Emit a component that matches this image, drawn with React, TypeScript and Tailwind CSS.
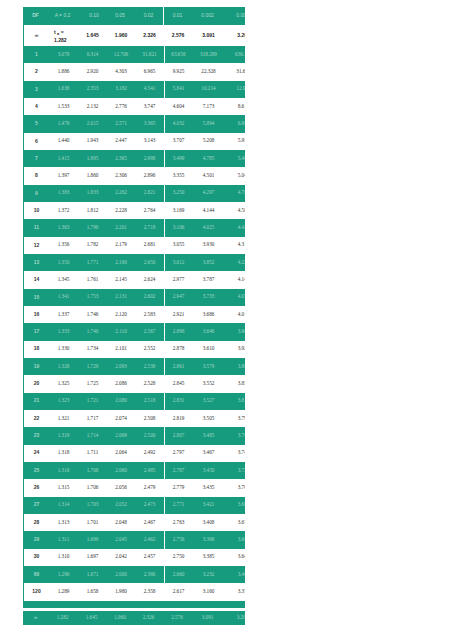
import React from "react";

const rows: [string, string[]][] = [
  ["1", ["3.078", "6.314", "12.706", "31.821", "63.656", "318.289", "636.578"]],
  ["2", ["1.886", "2.920", "4.303", "6.965", "9.925", "22.328", "31.600"]],
  ["3", ["1.638", "2.353", "3.182", "4.541", "5.841", "10.214", "12.924"]],
  ["4", ["1.533", "2.132", "2.776", "3.747", "4.604", "7.173", "8.610"]],
  ["5", ["1.476", "2.015", "2.571", "3.365", "4.032", "5.894", "6.869"]],
  ["6", ["1.440", "1.943", "2.447", "3.143", "3.707", "5.208", "5.959"]],
  ["7", ["1.415", "1.895", "2.365", "2.998", "3.499", "4.785", "5.408"]],
  ["8", ["1.397", "1.860", "2.306", "2.896", "3.355", "4.501", "5.041"]],
  ["9", ["1.383", "1.833", "2.262", "2.821", "3.250", "4.297", "4.781"]],
  ["10", ["1.372", "1.812", "2.228", "2.764", "3.169", "4.144", "4.587"]],
  ["11", ["1.363", "1.796", "2.201", "2.718", "3.106", "4.025", "4.437"]],
  ["12", ["1.356", "1.782", "2.179", "2.681", "3.055", "3.930", "4.318"]],
  ["13", ["1.350", "1.771", "2.160", "2.650", "3.012", "3.852", "4.221"]],
  ["14", ["1.345", "1.761", "2.145", "2.624", "2.977", "3.787", "4.140"]],
  ["15", ["1.341", "1.753", "2.131", "2.602", "2.947", "3.733", "4.073"]],
  ["16", ["1.337", "1.746", "2.120", "2.583", "2.921", "3.686", "4.015"]],
  ["17", ["1.333", "1.740", "2.110", "2.567", "2.898", "3.646", "3.965"]],
  ["18", ["1.330", "1.734", "2.101", "2.552", "2.878", "3.610", "3.922"]],
  ["19", ["1.328", "1.729", "2.093", "2.539", "2.861", "3.579", "3.883"]],
  ["20", ["1.325", "1.725", "2.086", "2.528", "2.845", "3.552", "3.850"]],
  ["21", ["1.323", "1.721", "2.080", "2.518", "2.831", "3.527", "3.819"]],
  ["22", ["1.321", "1.717", "2.074", "2.508", "2.819", "3.505", "3.792"]],
  ["23", ["1.319", "1.714", "2.069", "2.500", "2.807", "3.485", "3.768"]],
  ["24", ["1.318", "1.711", "2.064", "2.492", "2.797", "3.467", "3.745"]],
  ["25", ["1.316", "1.708", "2.060", "2.485", "2.787", "3.450", "3.725"]],
  ["26", ["1.315", "1.706", "2.056", "2.479", "2.779", "3.435", "3.707"]],
  ["27", ["1.314", "1.703", "2.052", "2.473", "2.771", "3.421", "3.689"]],
  ["28", ["1.313", "1.701", "2.048", "2.467", "2.763", "3.408", "3.674"]],
  ["29", ["1.311", "1.699", "2.045", "2.462", "2.756", "3.396", "3.660"]],
  ["30", ["1.310", "1.697", "2.042", "2.457", "2.750", "3.385", "3.646"]],
  ["60", ["1.296", "1.671", "2.000", "2.390", "2.660", "3.232", "3.460"]],
  ["120", ["1.289", "1.658", "1.980", "2.358", "2.617", "3.160", "3.373"]],
];

const grid =
  "grid grid-cols-[25px_29px_29px_28px_29px_28px_33px_37px] w-[258px]";

function DataRow({ label, values, green }: { label: string; values: string[]; green: boolean }) {
  const bg = green ? "bg-[#179b7e] text-[#9fd6c5]" : "bg-white text-[#333333]";
  return (
    <div className={`${grid} ${bg} h-[17.34px] border-l-[1.5px] border-[#179b7e]`}>
      <div className="flex items-center justify-center font-['Liberation_Sans',sans-serif] font-bold text-[5px]">
        {label}
      </div>
      {values.map((v, i) => (
        <div
          key={i}
          className={`flex items-center justify-center whitespace-nowrap font-['Liberation_Serif',serif] text-[5.2px] ${
            i === 4 ? "border-l border-white" : ""
          }`}
        >
          {v}
        </div>
      ))}
    </div>
  );
}

export default function App() {
  const headers = ["A = 0.2", "0.10", "0.05", "0.02", "0.01", "0.002", "0.001"];
  const inf = ["1.645", "1.960", "2.326", "2.576", "3.091", "3.291"];
  const infBottom = ["1.282", "1.645", "1.960", "2.326", "2.576", "3.091", "3.291"];
  return (
    <div className="min-h-[632px] w-[474px] bg-white pt-[7px] pl-[23px]">
      <div className="w-[222px] overflow-hidden">
        {/* header */}
        <div className={`${grid} h-[18px] bg-[#179b7e] text-[#a8dccc] font-['Liberation_Sans',sans-serif] text-[5px]`}>
          <div className="flex items-center justify-center font-bold">DF</div>
          {headers.map((h, i) => (
            <div
              key={i}
              className={`flex items-center justify-center whitespace-nowrap ${i === 4 ? "border-l border-white" : ""} ${
                i === 1 ? "pl-[5px]" : ""
              }`}
            >
              {h}
            </div>
          ))}
        </div>
        {/* t-alpha row */}
        <div className={`${grid} h-[21px] bg-white border-l-[1.5px] border-[#179b7e] text-[#222222] font-['Liberation_Sans',sans-serif] font-bold text-[5px]`}>
          <div className="flex items-center justify-center">∞</div>
          <div className="flex flex-col justify-center pl-[5px] leading-[8px]">
            <span>
              t <sub className="text-[4px]">a</sub> =
            </span>
            <span>1.282</span>
          </div>
          {inf.map((v, i) => (
            <div key={i} className="flex items-center justify-center whitespace-nowrap">
              {v}
            </div>
          ))}
        </div>
        {rows.map(([label, values], i) => (
          <DataRow key={label} label={label} values={values} green={i % 2 === 0} />
        ))}
        <div className="h-[7px] bg-[#179b7e]" />
        <div className="h-[3px] bg-white" />
        <div className={`${grid} h-[14px] bg-[#179b7e] text-[#9fd6c5]`}>
          <div className="flex items-center justify-center font-['Liberation_Sans',sans-serif] font-bold text-[5px]">∞</div>
          {infBottom.map((v, i) => (
            <div
              key={i}
              className="flex items-center justify-center whitespace-nowrap font-['Liberation_Serif',serif] text-[5.2px]"
            >
              {v}
            </div>
          ))}
        </div>
      </div>
    </div>
  );
}
